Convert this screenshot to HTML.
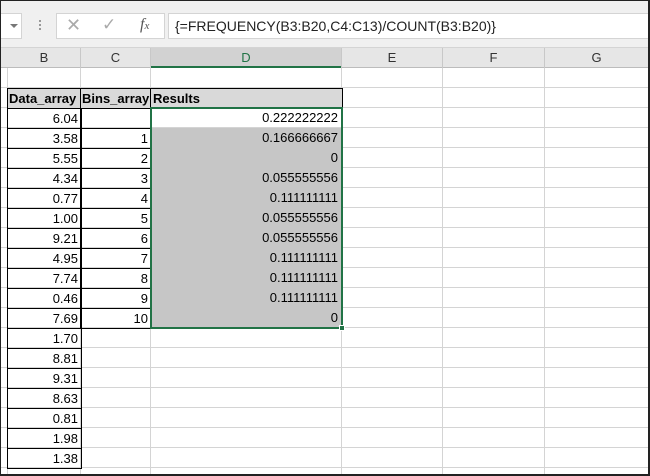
<!DOCTYPE html><html><head><style>
body{margin:0;width:650px;height:476px;overflow:hidden;background:#fff;font-family:"Liberation Sans",sans-serif;position:relative}
.a{position:absolute;box-sizing:border-box}
.t{font-size:13px;line-height:20px;color:#000;padding:0 3px;white-space:nowrap;overflow:hidden}
</style></head><body>
<div class="a" style="left:0;top:0;width:650px;height:48px;background:#f0f0f0;border-bottom:1px solid #d4d4d4"></div>
<div class="a" style="left:0;top:13px;width:22px;height:26px;background:#fff;border:1px solid #d4d4d4;border-left:none"></div>
<div class="a" style="left:10px;top:24px;width:0;height:0;border-left:4px solid transparent;border-right:4px solid transparent;border-top:4px solid #777"></div>
<div class="a" style="left:39px;top:20px;width:2px;height:12px;background:repeating-linear-gradient(#999 0 2px,transparent 2px 4px)"></div>
<div class="a" style="left:56px;top:13px;width:109px;height:26px;background:#fff;border:1px solid #d4d4d4"></div>
<div class="a" style="left:66px;top:15px;font-size:18px;color:#aaa">✕</div>
<div class="a" style="left:102px;top:15px;font-size:17px;color:#aaa">✓</div>
<div class="a" style="left:140px;top:16px;font-size:16px;font-style:italic;font-family:'Liberation Serif',serif;color:#555">f<span style="font-size:11px">x</span></div>
<div class="a" style="left:168px;top:13px;width:482px;height:26px;background:#fff;border:1px solid #d4d4d4;font-size:14px;line-height:24px;padding-left:6px;color:#222">{=FREQUENCY(B3:B20,C4:C13)/COUNT(B3:B20)}</div>
<div class="a" style="left:0;top:48px;width:650px;height:20px;background:#e6e6e6;border-bottom:1px solid #bcbcbc"></div>
<div class="a" style="left:151px;top:48px;width:191px;height:20px;background:#d2d2d2;border-bottom:2px solid #217346"></div>
<div class="a" style="left:0;top:48px;width:650px;height:20px;font-size:13px;line-height:20px;color:#333">
<span class="a" style="left:8px;width:73px;text-align:center;border-right:1px solid #c8c8c8;height:20px">B</span>
<span class="a" style="left:81px;width:70px;text-align:center;border-right:1px solid #c8c8c8;height:20px">C</span>
<span class="a" style="left:151px;width:191px;text-align:center;color:#217346;height:20px;border-right:1px solid #c8c8c8">D</span>
<span class="a" style="left:342px;width:101px;text-align:center;border-right:1px solid #c8c8c8;height:20px">E</span>
<span class="a" style="left:443px;width:102px;text-align:center;border-right:1px solid #c8c8c8;height:20px">F</span>
<span class="a" style="left:545px;width:103px;text-align:center;height:20px">G</span></div>
<div class="a" style="left:0;top:68px;width:650px;height:408px;background:
linear-gradient(90deg,transparent 7px,#d4d4d4 7px 8px,transparent 8px) ,
repeating-linear-gradient(180deg,transparent 0 19px,#d4d4d4 19px 20px)"></div>
<div class="a" style="left:80px;top:68px;width:1px;height:408px;background:#d4d4d4"></div>
<div class="a" style="left:150px;top:68px;width:1px;height:408px;background:#d4d4d4"></div>
<div class="a" style="left:341px;top:68px;width:1px;height:408px;background:#d4d4d4"></div>
<div class="a" style="left:442px;top:68px;width:1px;height:408px;background:#d4d4d4"></div>
<div class="a" style="left:544px;top:68px;width:1px;height:408px;background:#d4d4d4"></div>
<div class="a" style="left:151px;top:128px;width:191px;height:200px;background:#c6c6c6"></div>
<script>
var B=["6.04","3.58","5.55","4.34","0.77","1.00","9.21","4.95","7.74","0.46","7.69","1.70","8.81","9.31","8.63","0.81","1.98","1.38"];
var D=["0.222222222","0.166666667","0","0.055555556","0.111111111","0.055555556","0.055555556","0.111111111","0.111111111","0.111111111","0"];
var h="";
function c(x,y,w,txt,st){h+='<div class="a t" style="left:'+x+'px;top:'+y+'px;width:'+(w+1)+'px;height:21px;'+st+'">'+txt+'</div>';}
c(7,88,74,"Data_array","border:1px solid #000;background:#d9d9d9;font-weight:bold;padding-left:1px");
c(80,88,71,"Bins_array","border:1px solid #000;background:#d9d9d9;font-weight:bold;padding-left:1px");
c(150,88,192,"Results","border:1px solid #000;background:#d9d9d9;font-weight:bold;padding-left:2px");
for(var i=0;i<18;i++){c(7,108+20*i,74,B[i],"border:1px solid #000;text-align:right");
if(i<11)c(80,108+20*i,71,i?i:"","border:1px solid #000;text-align:right");}
document.write(h);
var s="";for(var i=0;i<11;i++)s+='<div class="a t" style="left:151px;top:'+(108+20*i)+'px;width:190px;height:20px;text-align:right;z-index:2">'+D[i]+'</div>';
document.write(s);
</script>
<div class="a" style="left:150px;top:107px;width:193px;height:222px;border:2px solid #217346;z-index:3"></div>
<div class="a" style="left:339px;top:325px;width:6px;height:6px;background:#217346;border:1px solid #fff;z-index:4"></div>
<div class="a" style="left:0;top:0;width:650px;height:476px;border:1px solid #222;border-right:2px solid #222;border-bottom:2px solid #222;z-index:5"></div>
</body></html>
